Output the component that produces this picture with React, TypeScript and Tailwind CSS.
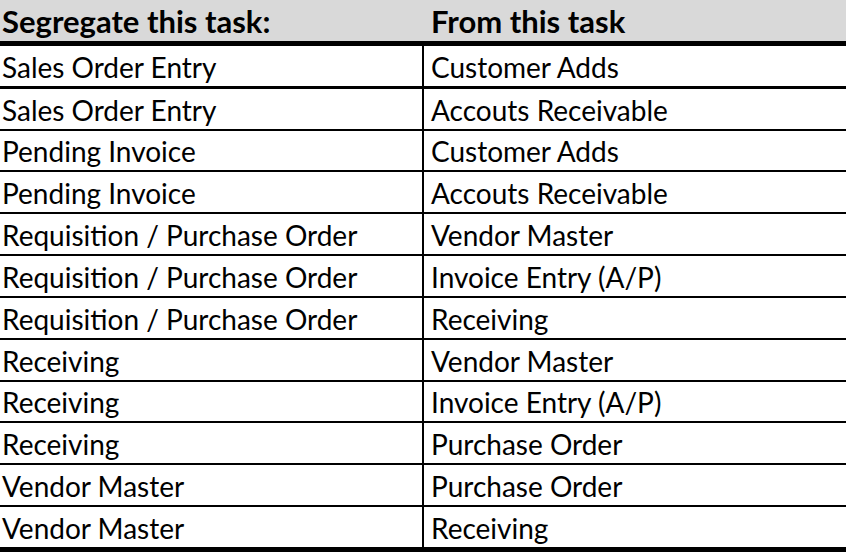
import React from "react";

const rows: [string, string][] = [
  ["Sales Order Entry", "Customer Adds"],
  ["Sales Order Entry", "Accouts Receivable"],
  ["Pending Invoice", "Customer Adds"],
  ["Pending Invoice", "Accouts Receivable"],
  ["Requisition / Purchase Order", "Vendor Master"],
  ["Requisition / Purchase Order", "Invoice Entry (A/P)"],
  ["Requisition / Purchase Order", "Receiving"],
  ["Receiving", "Vendor Master"],
  ["Receiving", "Invoice Entry (A/P)"],
  ["Receiving", "Purchase Order"],
  ["Vendor Master", "Purchase Order"],
  ["Vendor Master", "Receiving"],
];

export default function App() {
  return (
    <div
      className="w-[850px] h-[552px] bg-white text-black overflow-hidden"
      style={{ fontFamily: "Lato, 'Open Sans', sans-serif" }}
    >
      <div className="w-[846px] h-[552px] flex flex-col">
        <div className="h-[41px] shrink-0 bg-[#d9d9d9] flex font-bold text-[31px] leading-none">
          <div className="w-[424px] pl-[2px] flex items-end pb-[4px]">Segregate this task:</div>
          <div className="flex-1 pl-[7px] flex items-end pb-[4px]">From this task</div>
        </div>
        <div className="h-[5px] shrink-0 bg-black" />
        <div className="flex-1 flex flex-col border-b-[5px] border-black">
          {rows.map(([a, b], i) => (
            <div
              key={i}
              className={
                "flex-1 flex text-[28px] leading-none " +
                (i === 0 ? "border-b-[3px] border-black" : i < rows.length - 1 ? "border-b-2 border-black" : "")
              }
            >
              <div className="w-[424px] border-r-2 border-black pl-[2px] flex items-end pb-[5px]">{a}</div>
              <div className="flex-1 pl-[7px] flex items-end pb-[5px]">{b}</div>
            </div>
          ))}
        </div>
      </div>
    </div>
  );
}
